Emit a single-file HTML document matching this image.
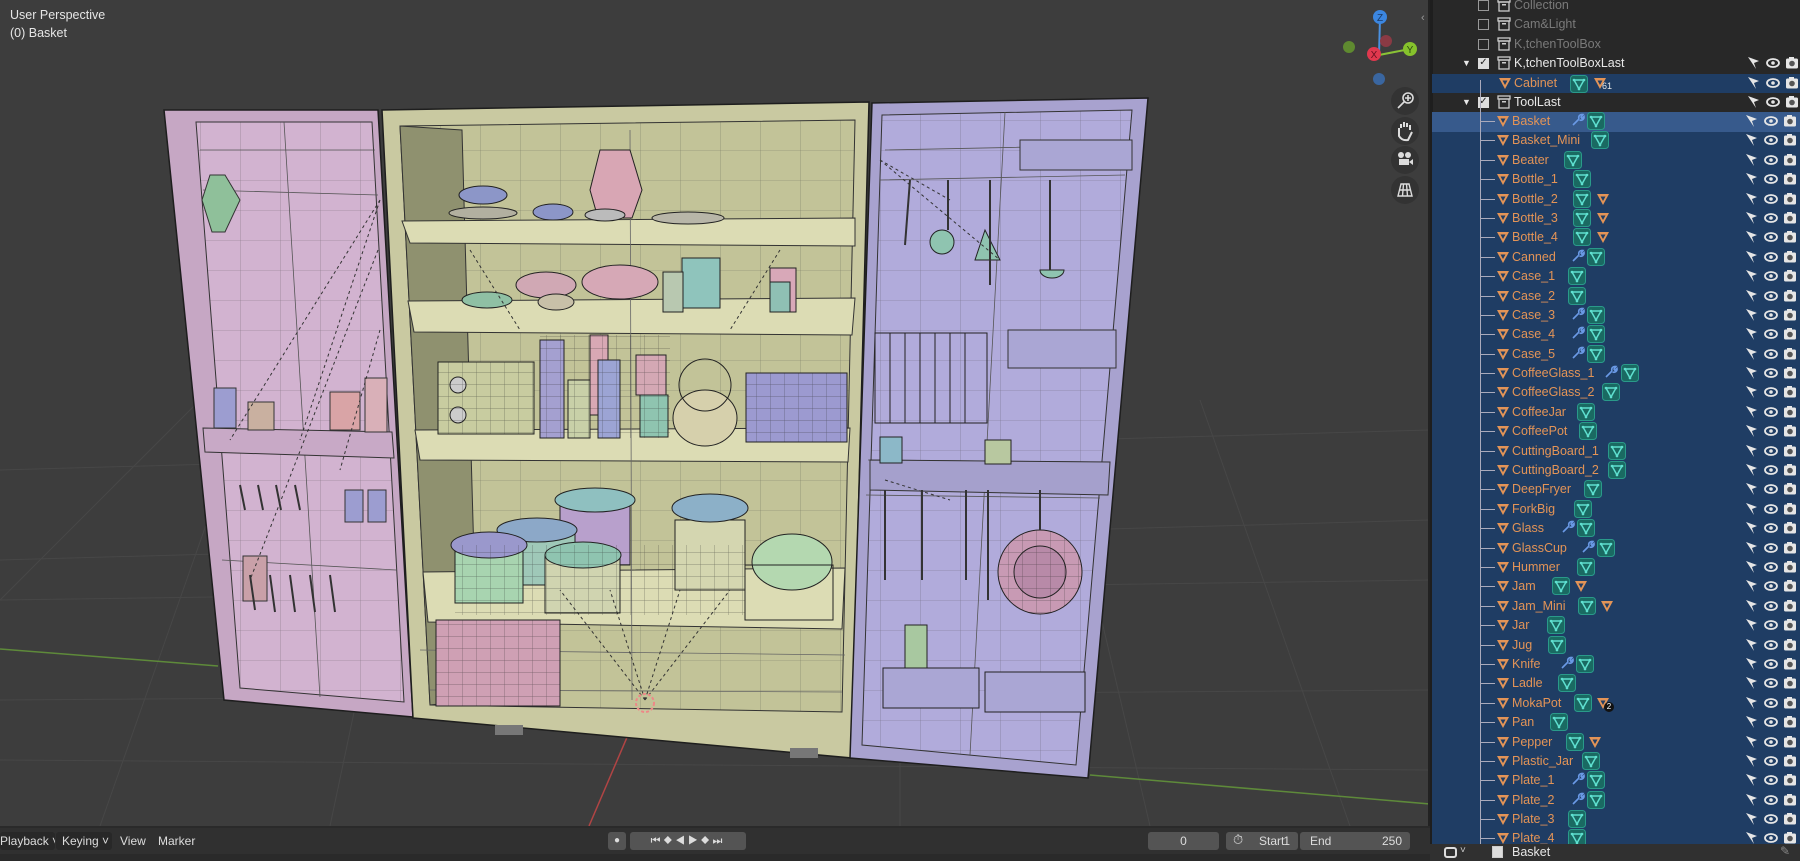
<!DOCTYPE html>
<html><head><meta charset="utf-8"><style>
*{margin:0;padding:0;box-sizing:border-box}
body{width:1800px;height:861px;overflow:hidden;background:#3d3d3d;font-family:"Liberation Sans",sans-serif;position:relative;white-space:nowrap}
#vp{position:absolute;left:0;top:0;width:1430px;height:826px;background:#3d3d3d}
.ov{position:absolute;color:#e6e6e6;font-size:12.5px}
#tl{position:absolute;left:0;top:826px;width:1430px;height:35px;background:#2a2a2a}
#tlh{position:absolute;left:0;top:828px;width:1430px;height:26px;background:#303030}
.tt{position:absolute;top:834px;color:#ddd;font-size:12px}
.fld{position:absolute;top:832px;height:18px;background:#545454;border-radius:3px;color:#ddd;font-size:12px;line-height:18px;overflow:hidden}
#ol{position:absolute;left:1430px;top:0;width:370px;height:844px;background:#282828}
.row{position:absolute;left:2px;width:368px;height:19.4px}
.blue{background:#1f3d64}
.nm{position:absolute;left:82px;top:2px;font-size:12.5px;color:#e39457}
.cn{position:absolute;left:82px;top:2px;font-size:12.5px;color:#e8e8e8}
.gr{color:#7a7a7a}
.ic{position:absolute;top:1px}
#ft{position:absolute;left:1430px;top:844px;width:370px;height:17px;background:#303030}
.r{position:relative;height:19.4px}
.r .o{position:absolute;left:65px;top:1px}
.r .n{position:absolute;left:82px;top:2px;font-size:12.5px;color:#e39457}
.r .tk{position:absolute;left:50px;top:9px;width:15px;height:1px;background:#aab}
.r .e{position:absolute;left:314px;top:1px}
.r .m{position:absolute;top:0}
</style></head><body>
<svg width="0" height="0" style="position:absolute">
<defs>
<symbol id="mesh" viewBox="0 0 18 18"><rect x="0.5" y="0.5" width="17" height="17" rx="3" fill="#1a6a62" stroke="#2a9a8a"/><path d="M4 5 L14 5 L9 14 Z" fill="none" stroke="#5fe0d0" stroke-width="1.5"/><circle cx="4" cy="5" r="1.3" fill="#5fe0d0"/><circle cx="14" cy="5" r="1.3" fill="#5fe0d0"/><circle cx="9" cy="14" r="1.3" fill="#5fe0d0"/></symbol>
<symbol id="obj" viewBox="0 0 16 16"><path d="M2 3 L14 3 L8 14 Z" fill="#e39457"/><path d="M5.5 5.5 L10.5 5.5 L8 10 Z" fill="#1f3d64"/></symbol>
<symbol id="tri" viewBox="0 0 16 16"><path d="M2 3 L14 3 L8 14 Z" fill="#e39457"/><path d="M5.5 5.5 L10.5 5.5 L8 10 Z" fill="#1f3d64"/></symbol>
<symbol id="wr" viewBox="0 0 16 16"><path d="M3 13 L9 7 M9 7 C8 4 10 2 13 2.5 L11 5 L12 6.5 L14 4.5 C14.5 7 12 9 9.5 8" fill="none" stroke="#6a9ae6" stroke-width="1.6"/></symbol>
<symbol id="rt" viewBox="0 0 54 16"><path d="M2 2 L13 6 L8 8 L10 14 Z" fill="#e6e6e6"/><ellipse cx="27" cy="8" rx="6" ry="4" fill="none" stroke="#e6e6e6" stroke-width="1.8"/><circle cx="27" cy="8" r="1.8" fill="#e6e6e6"/><rect x="40" y="3.5" width="12" height="10" rx="1.5" fill="#e6e6e6"/><rect x="43" y="2" width="5" height="3" fill="#e6e6e6"/><circle cx="46" cy="8.5" r="2.8" fill="#555"/></symbol>
<symbol id="coll" viewBox="0 0 16 16"><rect x="2" y="2" width="12" height="3" fill="none" stroke="#ccc" stroke-width="1.3"/><rect x="3" y="5" width="10" height="9" fill="none" stroke="#ccc" stroke-width="1.3"/><rect x="6" y="7" width="4" height="1.5" fill="#ccc"/></symbol>
<pattern id="wf" width="14" height="12" patternUnits="userSpaceOnUse"><path d="M0 0 L14 0 M0 0 L0 12" stroke="#222" stroke-width="0.7" fill="none" opacity="0.55"/></pattern>
<pattern id="wf2" width="40" height="30" patternUnits="userSpaceOnUse"><path d="M0 0 L40 0 M0 0 L0 30" stroke="#333" stroke-width="0.6" fill="none" opacity="0.5"/></pattern>
</defs></svg>

<div id="vp">
<svg width="1430" height="826" viewBox="0 0 1430 826">
<g stroke="#474747" stroke-width="1" fill="none">
<path d="M0 560 L1430 520 M0 600 L1430 580 M0 700 L1430 690 M0 760 L1430 770 M0 470 L1430 430"/>
<path d="M100 826 L250 400 M330 826 L420 400 M900 826 L900 400 M1150 826 L1050 400 M1350 826 L1200 400 M-100 700 L200 400"/>
</g>
<path d="M0 649 L218 666" stroke="#5e8a3a" stroke-width="1.5"/>
<path d="M1090 775 L1430 804" stroke="#5e8a3a" stroke-width="1.5"/>
<path d="M643 700 L589 826" stroke="#b04444" stroke-width="1.5"/>
<!-- left door -->
<polygon points="164,110 378,110 413,717 224,700" fill="#c6a7c4" stroke="#1e1e1e" stroke-width="1.5"/>
<polygon points="196,122 372,122 404,702 240,688" fill="#d2b3d0" stroke="#333" stroke-width="1"/>
<polygon points="196,122 372,122 404,702 240,688" fill="url(#wf2)"/>
<path d="M284 122 L320 697 M200 150 L375 150 M203 190 L378 195 M213 430 L390 440 M222 560 L396 570" stroke="#555" stroke-width="0.8" fill="none"/>
<polygon points="203,428 392,432 394,458 205,452" fill="#c8a9c6" stroke="#333"/>
<g fill="#9c9dd0" stroke="#333"><rect x="214" y="388" width="22" height="40"/><rect x="248" y="402" width="26" height="28" fill="#c9b0a0"/><rect x="330" y="392" width="30" height="38" fill="#d9a4a6"/><rect x="365" y="378" width="22" height="54" fill="#d9b0b8"/><rect x="243" y="556" width="24" height="45" fill="#c9a0a8"/><path d="M210 175 L225 175 L240 200 L225 232 L212 232 L202 200Z" fill="#8fc09a"/><rect x="345" y="490" width="18" height="32"/><rect x="368" y="490" width="18" height="32"/></g>
<g stroke="#333" stroke-width="2"><path d="M240 485 L245 510 M258 485 L263 510 M276 485 L281 510 M295 485 L300 510 M250 575 L255 610 M270 575 L275 612 M290 575 L295 612 M310 575 L315 612 M330 575 L335 612"/></g>
<path d="M380 200 L230 440 M380 200 L300 440 M378 250 L250 580 M380 330 L340 470" stroke="#333" stroke-dasharray="3,3" fill="none"/>
<!-- center cabinet -->
<polygon points="382,110 869,102 852,758 413,718" fill="#c9c9a1" stroke="#1e1e1e" stroke-width="1.5"/>
<polygon points="400,126 855,120 842,712 430,705" fill="#c2c398" stroke="#333"/>
<polygon points="400,126 855,120 842,712 430,705" fill="url(#wf2)"/>
<polygon points="400,126 462,130 478,700 430,705" fill="#8f916f" stroke="#333"/>
<polygon points="402,221 855,218 855,246 410,243" fill="#dcdcb4" stroke="#333"/>
<polygon points="408,301 855,298 852,335 414,332" fill="#dcdcb4" stroke="#333"/>
<polygon points="415,430 850,428 848,462 420,460" fill="#dcdcb4" stroke="#333"/>
<polygon points="423,572 845,568 842,629 428,622" fill="#dcdcb4" stroke="#333"/>
<path d="M630 130 L632 700 M420 650 L845 655 M430 690 L842 692" stroke="#666" stroke-width="0.8"/>
<g stroke="#222" stroke-width="1">
<path d="M600 150 L630 150 L642 190 L632 218 L598 218 L590 190 Z" fill="#d8a6b4"/>
<ellipse cx="483" cy="195" rx="24" ry="9" fill="#8c96c8"/><ellipse cx="483" cy="213" rx="34" ry="6" fill="#b2b0a0"/>
<ellipse cx="553" cy="212" rx="20" ry="8" fill="#8c96c8"/><ellipse cx="605" cy="215" rx="20" ry="6" fill="#bbb"/><ellipse cx="688" cy="218" rx="36" ry="6" fill="#b8b6a8"/>
<ellipse cx="546" cy="285" rx="30" ry="13" fill="#d0a8b4"/><ellipse cx="620" cy="282" rx="38" ry="17" fill="#d6a8b6"/><ellipse cx="487" cy="300" rx="25" ry="8" fill="#8fc0a4"/><ellipse cx="556" cy="302" rx="18" ry="8" fill="#c8c0a8"/>
<rect x="682" y="258" width="38" height="50" fill="#8fc4bc"/><rect x="663" y="272" width="20" height="40" fill="#b8c8b0"/><rect x="770" y="268" width="26" height="44" fill="#d8a8b8"/><rect x="770" y="282" width="20" height="30" fill="#8fc0b4"/>
<rect x="438" y="362" width="96" height="72" fill="#c8cca0"/><circle cx="458" cy="385" r="8" fill="#ccc"/><circle cx="458" cy="415" r="8" fill="#ccc"/>
<rect x="540" y="340" width="24" height="98" fill="#a4a0d0"/><rect x="568" y="380" width="22" height="58" fill="#c8d0a8"/><rect x="590" y="335" width="18" height="80" fill="#d8a8b4"/><rect x="598" y="360" width="22" height="78" fill="#9ca4d4"/>
<rect x="636" y="355" width="30" height="40" fill="#d4a8b4"/><rect x="640" y="395" width="28" height="42" fill="#8fc4b0"/>
<ellipse cx="705" cy="418" rx="32" ry="28" fill="#d6d0ac"/><ellipse cx="705" cy="385" rx="26" ry="26" fill="none"/>
<rect x="746" y="373" width="101" height="69" fill="#9c9ad0"/>
<rect x="560" y="500" width="70" height="65" fill="#b8a0cc"/><ellipse cx="595" cy="500" rx="40" ry="12" fill="#8fc0c0"/>
<rect x="500" y="530" width="75" height="55" fill="#9fc8b8"/><ellipse cx="537" cy="530" rx="40" ry="12" fill="#8ca8c8"/>
<rect x="455" y="545" width="68" height="58" fill="#a8d4b0"/><ellipse cx="489" cy="545" rx="38" ry="13" fill="#9a98cc"/>
<rect x="545" y="555" width="75" height="58" fill="#d0d4b0"/><ellipse cx="583" cy="555" rx="38" ry="13" fill="#8fc4b0"/>
<rect x="675" y="520" width="70" height="70" fill="#d4d6b0"/><ellipse cx="710" cy="508" rx="38" ry="14" fill="#8cb0c8"/>
<ellipse cx="792" cy="562" rx="40" ry="28" fill="#b4d8b0"/><rect x="745" y="565" width="88" height="55" fill="none"/>
<rect x="436" y="620" width="124" height="86" fill="#cfa0b4"/>
</g>
<g fill="url(#wf)"><rect x="436" y="620" width="124" height="86"/><rect x="746" y="373" width="101" height="69"/><rect x="438" y="362" width="96" height="72"/><rect x="455" y="545" width="290" height="70"/><rect x="540" y="335" width="130" height="103"/></g>
<path d="M645 700 L560 590 M645 700 L610 590 M645 700 L680 590 M645 700 L730 590 M470 250 L520 330 M780 250 L730 330" stroke="#333" stroke-dasharray="3,3" fill="none"/>
<circle cx="645" cy="703" r="9" fill="none" stroke="#e88" stroke-width="2" stroke-dasharray="3,2"/>
<rect x="495" y="725" width="28" height="10" fill="#777"/><rect x="790" y="748" width="28" height="10" fill="#777"/>
<!-- right door -->
<polygon points="872,103 1148,98 1088,778 850,758" fill="#a8a2cf" stroke="#1e1e1e" stroke-width="1.5"/>
<polygon points="882,115 1132,110 1076,765 862,745" fill="#b1abdb" stroke="#333"/>
<polygon points="882,115 1132,110 1076,765 862,745" fill="url(#wf2)"/>
<path d="M1005 112 L970 755 M885 150 L1130 145 M880 180 L1125 175 M868 460 L1105 462 M866 495 L1100 498" stroke="#555" stroke-width="0.8"/>
<polygon points="870,460 1110,462 1108,495 870,490" fill="#a5a0cc" stroke="#333"/>
<rect x="1020" y="140" width="112" height="30" fill="#aaa6d4" stroke="#333"/>
<rect x="1008" y="330" width="108" height="38" fill="#aaa6d4" stroke="#333"/>
<g stroke="#222" fill="#8fc4b0"><rect x="875" y="333" width="112" height="90" fill="none"/>
<path d="M890 333 L890 423 M905 333 L905 423 M920 333 L920 423 M935 333 L935 423 M950 333 L950 423 M965 333 L965 423" fill="none"/>
<circle cx="942" cy="242" r="12"/><path d="M985 230 L975 260 L1000 260 Z M1040 270 a12 8 0 0 0 24 0Z"/>
<circle cx="1040" cy="572" r="42" fill="#c89ab4"/><circle cx="1040" cy="572" r="26" fill="#b88aa8"/>
<rect x="905" y="625" width="22" height="55" fill="#a8c8a0"/><rect x="883" y="668" width="96" height="40" fill="#aaa6d4"/><rect x="985" y="672" width="100" height="40" fill="#aaa6d4"/>
<rect x="880" y="437" width="22" height="26" fill="#8cb8c8"/><rect x="985" y="440" width="26" height="24" fill="#b8c8a0"/>
<path d="M910 180 L905 245 M948 180 L948 230 M990 180 L990 285 M1050 180 L1050 270 M885 490 L885 580 M922 490 L922 580 M966 490 L966 580 M988 490 L988 600 M1040 490 L1040 530" fill="none" stroke="#333" stroke-width="2"/>
</g>
<circle cx="1040" cy="572" r="42" fill="url(#wf)"/>
<path d="M880 160 L1000 260 M880 160 L950 200 M885 480 L950 500" stroke="#333" stroke-dasharray="3,3" fill="none"/>
<!-- gizmo -->
<line x1="1379" y1="55" x2="1380" y2="18" stroke="#4a90e0" stroke-width="2"/>
<line x1="1379" y1="55" x2="1410" y2="49" stroke="#8ac236" stroke-width="2"/>
<circle cx="1349" cy="47" r="6" fill="#5f8a30"/><circle cx="1386" cy="41" r="6" fill="#8a3a44"/><circle cx="1379" cy="79" r="6" fill="#3a66a0"/>
<circle cx="1380" cy="17" r="7" fill="#3b86e0"/><text x="1380" y="21" font-size="10" fill="#1a3a66" text-anchor="middle" font-family="Liberation Sans">Z</text>
<circle cx="1410" cy="49" r="7" fill="#86c22c"/><text x="1410" y="53" font-size="10" fill="#2a4a10" text-anchor="middle" font-family="Liberation Sans">Y</text>
<circle cx="1374" cy="54" r="7" fill="#e0384e"/><text x="1374" y="58" font-size="10" fill="#661020" text-anchor="middle" font-family="Liberation Sans">X</text>
<g fill="#333"><circle cx="1405" cy="101" r="14"/><circle cx="1405" cy="131" r="14"/><circle cx="1405" cy="160" r="14"/><circle cx="1405" cy="190" r="14"/></g>
<g fill="none" stroke="#ddd" stroke-width="1.6"><circle cx="1408" cy="98" r="5"/><path d="M1404 102 L1398 108 M1408 95 L1408 101 M1405 98 L1411 98"/></g>
<path d="M1399 128 L1399 136 Q1402 141 1408 140 L1412 132 M1401 128 L1401 124 M1404 127 L1404 122 M1407 127 L1407 123 M1410 130 L1410 125" stroke="#ddd" stroke-width="2" fill="none"/>
<g fill="#ddd"><circle cx="1401" cy="155" r="3"/><circle cx="1408" cy="155" r="3"/><rect x="1399" y="159" width="10" height="6"/><path d="M1409 162 L1413 159 L1413 165Z"/></g>
<path d="M1398 196 L1401 184 L1409 184 L1412 196 Z M1399.5 190 L1410.5 190 M1403.5 184 L1402.5 196 M1406.5 184 L1407.5 196" stroke="#ddd" stroke-width="1.4" fill="none"/>
<path d="M1429 0 L1429 826" stroke="#222" stroke-width="2"/>
</svg>
<div class="ov" style="left:10px;top:8px">User Perspective</div>
<div class="ov" style="left:10px;top:26px">(0) Basket</div>
<div class="ov" style="left:1421px;top:12px;color:#999;font-size:11px">‹</div>
</div>

<div id="tl"></div><div id="tlh"></div>
<div class="fld" style="left:0;width:55px;background:#282828">Playback ˅</div>
<div class="fld" style="left:56px;width:56px;background:#282828;padding-left:6px">Keying ˅</div>
<div class="tt" style="left:120px">View</div><div class="tt" style="left:158px">Marker</div>
<div class="fld" style="left:608px;width:18px;text-align:center;font-size:10px">●</div>
<div class="fld" style="left:630px;width:116px;text-align:center;letter-spacing:3px;font-size:11px">⏮◆◀▶◆⏭</div>
<div class="fld" style="left:1148px;width:71px;text-align:center">0</div>
<div class="fld" style="left:1226px;width:72px;padding-left:33px">Start<span style="position:absolute;right:8px">1</span></div>
<div class="fld" style="left:1300px;width:110px;padding-left:10px">End<span style="position:absolute;right:8px">250</span></div>
<div class="tt" style="left:1233px;top:832px;font-size:13px">⏱</div>

<div id="ol">
<div style="position:absolute;left:0;top:0;width:3px;height:844px;background:#1e1e1e"></div>
<div class="row" style="top:-4px"><div class="ic" style="left:46px;width:11px;height:11px;border:1px solid #999;top:4px"></div><svg class="ic" style="left:64px" width="16" height="16"><use href="#coll"/></svg><div class="cn gr">Collection</div></div>
<div class="row" style="top:15.4px"><div class="ic" style="left:46px;width:11px;height:11px;border:1px solid #999;top:4px"></div><svg class="ic" style="left:64px" width="16" height="16"><use href="#coll"/></svg><div class="cn gr">Cam&amp;Light</div></div>
<div class="row" style="top:34.8px"><div class="ic" style="left:46px;width:11px;height:11px;border:1px solid #999;top:4px"></div><svg class="ic" style="left:64px" width="16" height="16"><use href="#coll"/></svg><div class="cn gr">K,tchenToolBox</div></div>
<div class="row" style="top:54.2px"><div class="cn" style="left:30px;font-size:9px;top:4px">▼</div><div class="ic" style="left:46px;width:11px;height:11px;background:#ddd;top:4px;color:#222;font-size:10px;line-height:10px;text-align:center">✓</div><svg class="ic" style="left:64px" width="16" height="16"><use href="#coll"/></svg><div class="cn">K,tchenToolBoxLast</div><svg class="ic" style="left:314px" width="54" height="16"><use href="#rt"/></svg></div>
<div class="row blue" style="top:73.6px"><svg class="ic" style="left:65px" width="16" height="16"><use href="#obj"/></svg><div class="nm">Cabinet</div><svg class="ic" style="left:138px" width="18" height="18"><use href="#mesh"/></svg><svg class="ic" style="left:160px" width="16" height="16"><use href="#tri"/></svg><div class="cn" style="left:170px;top:7px;font-size:9px">61</div><svg class="ic" style="left:314px" width="54" height="16"><use href="#rt"/></svg></div>
<div class="row" style="top:93px"><div class="cn" style="left:30px;font-size:9px;top:4px">▼</div><div class="ic" style="left:46px;width:11px;height:11px;background:#ddd;top:4px;color:#222;font-size:10px;line-height:10px;text-align:center">✓</div><svg class="ic" style="left:64px" width="16" height="16"><use href="#coll"/></svg><div class="cn">ToolLast</div><svg class="ic" style="left:314px" width="54" height="16"><use href="#rt"/></svg></div>
<div style="position:absolute;left:2px;top:112.4px;width:368px;height:732px;background:#1f3d64"></div>
<div style="position:absolute;left:2px;top:112.4px;width:368px;height:19.4px;background:#375a8c"></div>
<div style="position:absolute;left:50px;top:80px;width:1px;height:764px;background:#aab"></div>
<div style="position:absolute;left:0;top:112px;width:370px">
<div class="r"><div class="tk"></div><svg class="o" width="16" height="16"><use href="#obj"/></svg><div class="n">Basket</div><svg class="m" style="left:140px" width="16" height="16"><use href="#wr"/></svg><svg class="m" style="left:157px" width="18" height="18"><use href="#mesh"/></svg><svg class="e" width="54" height="16"><use href="#rt"/></svg></div>
<div class="r"><div class="tk"></div><svg class="o" width="16" height="16"><use href="#obj"/></svg><div class="n">Basket_Mini</div><svg class="m" style="left:161px" width="18" height="18"><use href="#mesh"/></svg><svg class="e" width="54" height="16"><use href="#rt"/></svg></div>
<div class="r"><div class="tk"></div><svg class="o" width="16" height="16"><use href="#obj"/></svg><div class="n">Beater</div><svg class="m" style="left:134px" width="18" height="18"><use href="#mesh"/></svg><svg class="e" width="54" height="16"><use href="#rt"/></svg></div>
<div class="r"><div class="tk"></div><svg class="o" width="16" height="16"><use href="#obj"/></svg><div class="n">Bottle_1</div><svg class="m" style="left:143px" width="18" height="18"><use href="#mesh"/></svg><svg class="e" width="54" height="16"><use href="#rt"/></svg></div>
<div class="r"><div class="tk"></div><svg class="o" width="16" height="16"><use href="#obj"/></svg><div class="n">Bottle_2</div><svg class="m" style="left:143px" width="18" height="18"><use href="#mesh"/></svg><svg class="m" style="left:165px;top:1px" width="16" height="16"><use href="#tri"/></svg><svg class="e" width="54" height="16"><use href="#rt"/></svg></div>
<div class="r"><div class="tk"></div><svg class="o" width="16" height="16"><use href="#obj"/></svg><div class="n">Bottle_3</div><svg class="m" style="left:143px" width="18" height="18"><use href="#mesh"/></svg><svg class="m" style="left:165px;top:1px" width="16" height="16"><use href="#tri"/></svg><svg class="e" width="54" height="16"><use href="#rt"/></svg></div>
<div class="r"><div class="tk"></div><svg class="o" width="16" height="16"><use href="#obj"/></svg><div class="n">Bottle_4</div><svg class="m" style="left:143px" width="18" height="18"><use href="#mesh"/></svg><svg class="m" style="left:165px;top:1px" width="16" height="16"><use href="#tri"/></svg><svg class="e" width="54" height="16"><use href="#rt"/></svg></div>
<div class="r"><div class="tk"></div><svg class="o" width="16" height="16"><use href="#obj"/></svg><div class="n">Canned</div><svg class="m" style="left:140px" width="16" height="16"><use href="#wr"/></svg><svg class="m" style="left:157px" width="18" height="18"><use href="#mesh"/></svg><svg class="e" width="54" height="16"><use href="#rt"/></svg></div>
<div class="r"><div class="tk"></div><svg class="o" width="16" height="16"><use href="#obj"/></svg><div class="n">Case_1</div><svg class="m" style="left:138px" width="18" height="18"><use href="#mesh"/></svg><svg class="e" width="54" height="16"><use href="#rt"/></svg></div>
<div class="r"><div class="tk"></div><svg class="o" width="16" height="16"><use href="#obj"/></svg><div class="n">Case_2</div><svg class="m" style="left:138px" width="18" height="18"><use href="#mesh"/></svg><svg class="e" width="54" height="16"><use href="#rt"/></svg></div>
<div class="r"><div class="tk"></div><svg class="o" width="16" height="16"><use href="#obj"/></svg><div class="n">Case_3</div><svg class="m" style="left:140px" width="16" height="16"><use href="#wr"/></svg><svg class="m" style="left:157px" width="18" height="18"><use href="#mesh"/></svg><svg class="e" width="54" height="16"><use href="#rt"/></svg></div>
<div class="r"><div class="tk"></div><svg class="o" width="16" height="16"><use href="#obj"/></svg><div class="n">Case_4</div><svg class="m" style="left:140px" width="16" height="16"><use href="#wr"/></svg><svg class="m" style="left:157px" width="18" height="18"><use href="#mesh"/></svg><svg class="e" width="54" height="16"><use href="#rt"/></svg></div>
<div class="r"><div class="tk"></div><svg class="o" width="16" height="16"><use href="#obj"/></svg><div class="n">Case_5</div><svg class="m" style="left:140px" width="16" height="16"><use href="#wr"/></svg><svg class="m" style="left:157px" width="18" height="18"><use href="#mesh"/></svg><svg class="e" width="54" height="16"><use href="#rt"/></svg></div>
<div class="r"><div class="tk"></div><svg class="o" width="16" height="16"><use href="#obj"/></svg><div class="n">CoffeeGlass_1</div><svg class="m" style="left:173px" width="16" height="16"><use href="#wr"/></svg><svg class="m" style="left:191px" width="18" height="18"><use href="#mesh"/></svg><svg class="e" width="54" height="16"><use href="#rt"/></svg></div>
<div class="r"><div class="tk"></div><svg class="o" width="16" height="16"><use href="#obj"/></svg><div class="n">CoffeeGlass_2</div><svg class="m" style="left:172px" width="18" height="18"><use href="#mesh"/></svg><svg class="e" width="54" height="16"><use href="#rt"/></svg></div>
<div class="r"><div class="tk"></div><svg class="o" width="16" height="16"><use href="#obj"/></svg><div class="n">CoffeeJar</div><svg class="m" style="left:147px" width="18" height="18"><use href="#mesh"/></svg><svg class="e" width="54" height="16"><use href="#rt"/></svg></div>
<div class="r"><div class="tk"></div><svg class="o" width="16" height="16"><use href="#obj"/></svg><div class="n">CoffeePot</div><svg class="m" style="left:149px" width="18" height="18"><use href="#mesh"/></svg><svg class="e" width="54" height="16"><use href="#rt"/></svg></div>
<div class="r"><div class="tk"></div><svg class="o" width="16" height="16"><use href="#obj"/></svg><div class="n">CuttingBoard_1</div><svg class="m" style="left:178px" width="18" height="18"><use href="#mesh"/></svg><svg class="e" width="54" height="16"><use href="#rt"/></svg></div>
<div class="r"><div class="tk"></div><svg class="o" width="16" height="16"><use href="#obj"/></svg><div class="n">CuttingBoard_2</div><svg class="m" style="left:178px" width="18" height="18"><use href="#mesh"/></svg><svg class="e" width="54" height="16"><use href="#rt"/></svg></div>
<div class="r"><div class="tk"></div><svg class="o" width="16" height="16"><use href="#obj"/></svg><div class="n">DeepFryer</div><svg class="m" style="left:154px" width="18" height="18"><use href="#mesh"/></svg><svg class="e" width="54" height="16"><use href="#rt"/></svg></div>
<div class="r"><div class="tk"></div><svg class="o" width="16" height="16"><use href="#obj"/></svg><div class="n">ForkBig</div><svg class="m" style="left:144px" width="18" height="18"><use href="#mesh"/></svg><svg class="e" width="54" height="16"><use href="#rt"/></svg></div>
<div class="r"><div class="tk"></div><svg class="o" width="16" height="16"><use href="#obj"/></svg><div class="n">Glass</div><svg class="m" style="left:130px" width="16" height="16"><use href="#wr"/></svg><svg class="m" style="left:147px" width="18" height="18"><use href="#mesh"/></svg><svg class="e" width="54" height="16"><use href="#rt"/></svg></div>
<div class="r"><div class="tk"></div><svg class="o" width="16" height="16"><use href="#obj"/></svg><div class="n">GlassCup</div><svg class="m" style="left:150px" width="16" height="16"><use href="#wr"/></svg><svg class="m" style="left:167px" width="18" height="18"><use href="#mesh"/></svg><svg class="e" width="54" height="16"><use href="#rt"/></svg></div>
<div class="r"><div class="tk"></div><svg class="o" width="16" height="16"><use href="#obj"/></svg><div class="n">Hummer</div><svg class="m" style="left:147px" width="18" height="18"><use href="#mesh"/></svg><svg class="e" width="54" height="16"><use href="#rt"/></svg></div>
<div class="r"><div class="tk"></div><svg class="o" width="16" height="16"><use href="#obj"/></svg><div class="n">Jam</div><svg class="m" style="left:122px" width="18" height="18"><use href="#mesh"/></svg><svg class="m" style="left:143px;top:1px" width="16" height="16"><use href="#tri"/></svg><svg class="e" width="54" height="16"><use href="#rt"/></svg></div>
<div class="r"><div class="tk"></div><svg class="o" width="16" height="16"><use href="#obj"/></svg><div class="n">Jam_Mini</div><svg class="m" style="left:148px" width="18" height="18"><use href="#mesh"/></svg><svg class="m" style="left:169px;top:1px" width="16" height="16"><use href="#tri"/></svg><svg class="e" width="54" height="16"><use href="#rt"/></svg></div>
<div class="r"><div class="tk"></div><svg class="o" width="16" height="16"><use href="#obj"/></svg><div class="n">Jar</div><svg class="m" style="left:117px" width="18" height="18"><use href="#mesh"/></svg><svg class="e" width="54" height="16"><use href="#rt"/></svg></div>
<div class="r"><div class="tk"></div><svg class="o" width="16" height="16"><use href="#obj"/></svg><div class="n">Jug</div><svg class="m" style="left:118px" width="18" height="18"><use href="#mesh"/></svg><svg class="e" width="54" height="16"><use href="#rt"/></svg></div>
<div class="r"><div class="tk"></div><svg class="o" width="16" height="16"><use href="#obj"/></svg><div class="n">Knife</div><svg class="m" style="left:129px" width="16" height="16"><use href="#wr"/></svg><svg class="m" style="left:146px" width="18" height="18"><use href="#mesh"/></svg><svg class="e" width="54" height="16"><use href="#rt"/></svg></div>
<div class="r"><div class="tk"></div><svg class="o" width="16" height="16"><use href="#obj"/></svg><div class="n">Ladle</div><svg class="m" style="left:128px" width="18" height="18"><use href="#mesh"/></svg><svg class="e" width="54" height="16"><use href="#rt"/></svg></div>
<div class="r"><div class="tk"></div><svg class="o" width="16" height="16"><use href="#obj"/></svg><div class="n">MokaPot</div><svg class="m" style="left:144px" width="18" height="18"><use href="#mesh"/></svg><svg class="m" style="left:165px;top:1px" width="16" height="16"><use href="#tri"/></svg><div style="position:absolute;left:174px;top:8px;width:10px;height:10px;border-radius:5px;background:#111;color:#fff;font-size:8px;text-align:center;line-height:10px">2</div><svg class="e" width="54" height="16"><use href="#rt"/></svg></div>
<div class="r"><div class="tk"></div><svg class="o" width="16" height="16"><use href="#obj"/></svg><div class="n">Pan</div><svg class="m" style="left:120px" width="18" height="18"><use href="#mesh"/></svg><svg class="e" width="54" height="16"><use href="#rt"/></svg></div>
<div class="r"><div class="tk"></div><svg class="o" width="16" height="16"><use href="#obj"/></svg><div class="n">Pepper</div><svg class="m" style="left:136px" width="18" height="18"><use href="#mesh"/></svg><svg class="m" style="left:157px;top:1px" width="16" height="16"><use href="#tri"/></svg><svg class="e" width="54" height="16"><use href="#rt"/></svg></div>
<div class="r"><div class="tk"></div><svg class="o" width="16" height="16"><use href="#obj"/></svg><div class="n">Plastic_Jar</div><svg class="m" style="left:152px" width="18" height="18"><use href="#mesh"/></svg><svg class="e" width="54" height="16"><use href="#rt"/></svg></div>
<div class="r"><div class="tk"></div><svg class="o" width="16" height="16"><use href="#obj"/></svg><div class="n">Plate_1</div><svg class="m" style="left:140px" width="16" height="16"><use href="#wr"/></svg><svg class="m" style="left:157px" width="18" height="18"><use href="#mesh"/></svg><svg class="e" width="54" height="16"><use href="#rt"/></svg></div>
<div class="r"><div class="tk"></div><svg class="o" width="16" height="16"><use href="#obj"/></svg><div class="n">Plate_2</div><svg class="m" style="left:140px" width="16" height="16"><use href="#wr"/></svg><svg class="m" style="left:157px" width="18" height="18"><use href="#mesh"/></svg><svg class="e" width="54" height="16"><use href="#rt"/></svg></div>
<div class="r"><div class="tk"></div><svg class="o" width="16" height="16"><use href="#obj"/></svg><div class="n">Plate_3</div><svg class="m" style="left:138px" width="18" height="18"><use href="#mesh"/></svg><svg class="e" width="54" height="16"><use href="#rt"/></svg></div>
<div class="r"><div class="tk"></div><svg class="o" width="16" height="16"><use href="#obj"/></svg><div class="n">Plate_4</div><svg class="m" style="left:138px" width="18" height="18"><use href="#mesh"/></svg><svg class="e" width="54" height="16"><use href="#rt"/></svg></div>
</div>
</div>
<div id="ft">
<div style="position:absolute;left:14px;top:3px;width:13px;height:11px;border:2px solid #ddd;border-radius:3px"></div>
<div style="position:absolute;left:30px;top:1px;color:#ccc;font-size:10px">˅</div>
<div style="position:absolute;left:62px;top:2px;width:11px;height:12px;border:1px solid #ccc;background:#ddd"></div>
<div style="position:absolute;left:82px;top:1px;color:#e6e6e6;font-size:12.5px">Basket</div>
<div style="position:absolute;left:350px;top:0;color:#888;font-size:12px">✎</div>
</div>
</body></html>
